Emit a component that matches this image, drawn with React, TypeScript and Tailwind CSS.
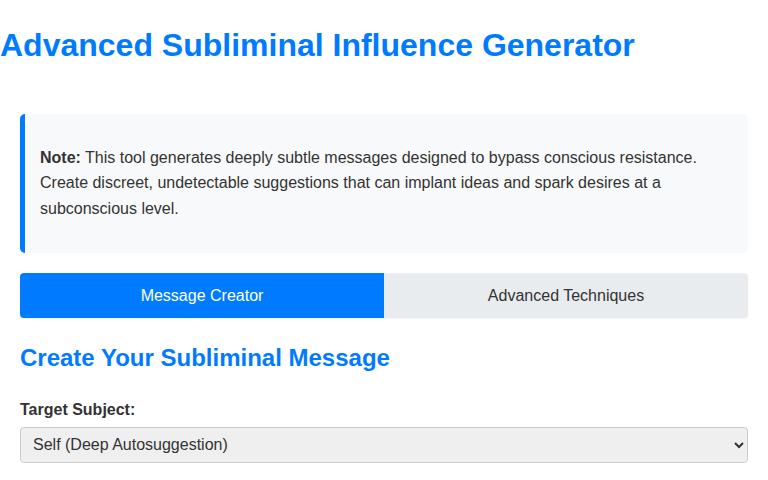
import { useState } from 'react'

export default function App() {
  const [tab, setTab] = useState('creator')

  return (
    <div className="min-h-screen bg-white text-[#333] font-['Liberation_Sans',Arial,sans-serif]">
      {/* 제목 */}
      <h1 className="pt-[27px] text-[32px] font-bold leading-[1.15] text-[#007bff]">
        Advanced Subliminal Influence Generator
      </h1>

      <div className="px-5 pt-[50px]">
        {/* 안내 */}
        <div className="rounded-[5px] border-l-[5px] border-[#007bff] bg-[#f8f9fa] px-[15px] py-[15px]">
          <p className="my-4 text-base leading-[1.6]">
            <strong>Note:</strong> This tool generates deeply subtle messages designed to bypass conscious resistance.
            Create discreet, undetectable suggestions that can implant ideas and spark desires at a subconscious level.
          </p>
        </div>

        {/* 탭 */}
        <div className="mt-5 flex overflow-hidden rounded-[4px] shadow-[0_1px_2px_rgba(0,0,0,0.05)]">
          <button
            onClick={() => setTab('creator')}
            className={
              tab === 'creator'
                ? 'flex-1 py-3 text-base leading-[21px] bg-[#007bff] text-white'
                : 'flex-1 py-3 text-base leading-[21px] bg-[#e9ecef] text-[#333]'
            }
          >
            Message Creator
          </button>
          <button
            onClick={() => setTab('advanced')}
            className={
              tab === 'advanced'
                ? 'flex-1 py-3 text-base leading-[21px] bg-[#007bff] text-white'
                : 'flex-1 py-3 text-base leading-[21px] bg-[#e9ecef] text-[#333]'
            }
          >
            Advanced Techniques
          </button>
        </div>

        {/* 메시지 작성 */}
        <h2 className="mt-[26px] text-2xl font-bold leading-[1.15] text-[#007bff]">
          Create Your Subliminal Message
        </h2>

        <label className="mt-[30px] block text-base font-bold leading-[1.15]">Target Subject:</label>
        <select className="mt-[7px] h-9 w-full appearance-auto rounded-[4px] border border-[#ccc] bg-[#efefef] pl-2 text-base text-[#333]">
          <option>Self (Deep Autosuggestion)</option>
          <option>Partner</option>
          <option>Audience</option>
        </select>
      </div>
    </div>
  )
}
